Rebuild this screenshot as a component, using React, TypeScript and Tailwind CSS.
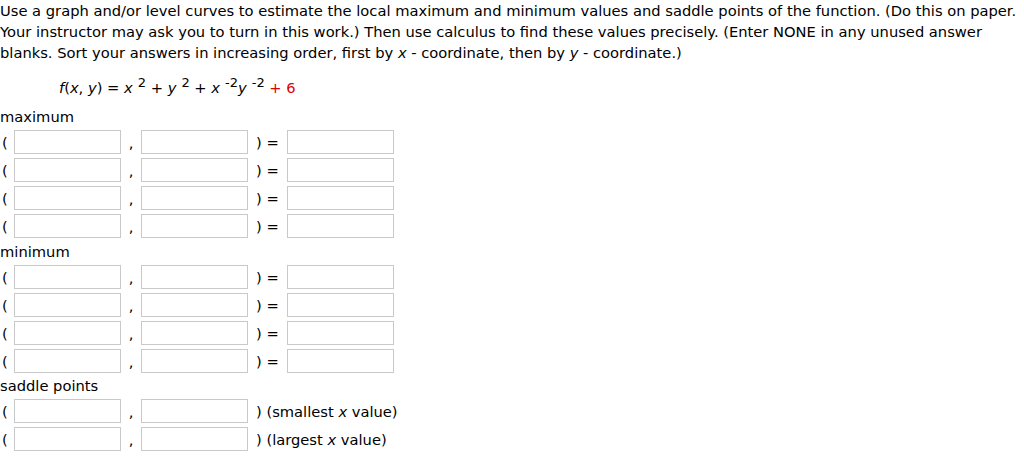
import React from "react";

const font = { fontFamily: '"DejaVu Sans", Verdana, sans-serif' };

function Box() {
  return (
    <input
      type="text"
      className="w-[107px] h-[24px] border border-[#c9c9c9] bg-white outline-none"
    />
  );
}

function PointRow({ tail }: { tail?: React.ReactNode }) {
  return (
    <div className="flex items-center h-[28px]">
      <span className="w-[14px] pl-[2px]">(</span>
      <Box />
      <span className="w-[20px] text-center">,</span>
      <Box />
      {tail ? (
        <span className="pl-[8px] whitespace-nowrap">) {tail}</span>
      ) : (
        <>
          <span className="w-[39px] pl-[8px]">) =</span>
          <Box />
        </>
      )}
    </div>
  );
}

function Group({ label, first }: { label: string; first?: boolean }) {
  return (
    <div className={first ? "" : "mt-[1px]"}>
      <div className="h-[22px] leading-[22px]">{label}</div>
      <PointRow />
      <PointRow />
      <PointRow />
      <PointRow />
    </div>
  );
}

export default function App() {
  return (
    <div className="bg-white text-black text-[14.7px] leading-[21px] w-[1024px] h-[459px] overflow-hidden" style={font}>
      <p className="whitespace-nowrap">
        Use a graph and/or level curves to estimate the local maximum and minimum values and saddle points of the function. (Do this on paper.
        <br />
        Your instructor may ask you to turn in this work.) Then use calculus to find these values precisely. (Enter NONE in any unused answer
        <br />
        blanks. Sort your answers in increasing order, first by <i>x</i> - coordinate, then by <i>y</i> - coordinate.)
      </p>

      <div className="mt-[14px] mb-[8px] pl-[59px] h-[21px] whitespace-nowrap">
        <i>f</i>(<i>x</i>, <i>y</i>) = <i>x</i>
        <sup className="text-[13px] ml-[5px]">2</sup> + <i>y</i>
        <sup className="text-[13px] ml-[5px]">2</sup> + <i>x</i>
        <sup className="text-[13px] ml-[5px]">-2</sup>
        <i>y</i>
        <sup className="text-[13px] ml-[5px]">-2</sup>{" "}
        <span className="text-[#e00000]">+ 6</span>
      </div>

      <Group label="maximum" first />
      <Group label="minimum" />
      <div>
        <div className="h-[22px] leading-[22px]">saddle points</div>
        <PointRow tail={<>(smallest <i>x</i> value)</>} />
        <PointRow tail={<>(largest <i>x</i> value)</>} />
      </div>
    </div>
  );
}
